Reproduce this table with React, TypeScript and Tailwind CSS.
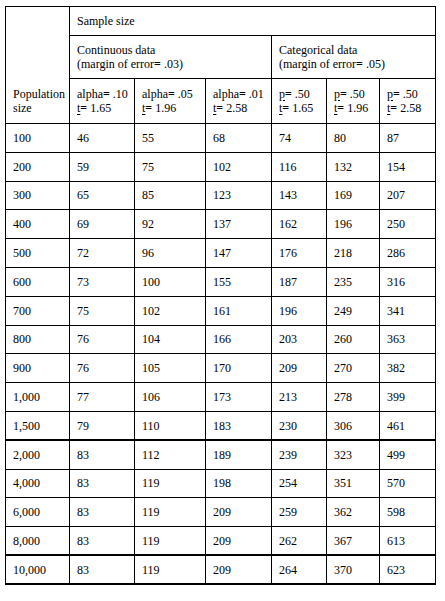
const rows: [string, number[]][] = [
  ["100", [46, 55, 68, 74, 80, 87]],
  ["200", [59, 75, 102, 116, 132, 154]],
  ["300", [65, 85, 123, 143, 169, 207]],
  ["400", [69, 92, 137, 162, 196, 250]],
  ["500", [72, 96, 147, 176, 218, 286]],
  ["600", [73, 100, 155, 187, 235, 316]],
  ["700", [75, 102, 161, 196, 249, 341]],
  ["800", [76, 104, 166, 203, 260, 363]],
  ["900", [76, 105, 170, 209, 270, 382]],
  ["1,000", [77, 106, 173, 213, 278, 399]],
  ["1,500", [79, 110, 183, 230, 306, 461]],
  ["2,000", [83, 112, 189, 239, 323, 499]],
  ["4,000", [83, 119, 198, 254, 351, 570]],
  ["6,000", [83, 119, 209, 259, 362, 598]],
  ["8,000", [83, 119, 209, 262, 367, 613]],
  ["10,000", [83, 119, 209, 264, 370, 623]],
];

// rows that get the heavier rule above them
const thick = new Set(["2,000", "10,000"]);

const Eq = () => <span className="font-bold">=</span>;

function Param({ sym, a, t }: { sym: string; a: string; t: string }) {
  return (
    <>
      {sym === "t" ? (
        <>
          alpha<Eq /> {a}
        </>
      ) : (
        <>
          <span className="underline underline-offset-2">p</span>
          <Eq /> {a}
        </>
      )}
      <br />
      <span className="underline underline-offset-2">t</span>
      <Eq /> {t}
    </>
  );
}

export default function App() {
  const cell = "border border-black pl-[7px] pr-0 align-middle text-left font-normal whitespace-nowrap";
  return (
    <div className="min-h-screen bg-white pl-[5px] pt-[6px] text-[12px] leading-[14px] text-black" style={{ fontFamily: '"Liberation Serif", "Times New Roman", serif' }}>
      <table className="w-[430px] table-fixed border-collapse border-b-2 border-black">
        <colgroup>
          <col className="w-[64px]" />
          <col className="w-[65px]" />
          <col className="w-[71px]" />
          <col className="w-[66px]" />
          <col className="w-[55px]" />
          <col className="w-[53px]" />
          <col className="w-[56px]" />
        </colgroup>
        <thead>
          <tr className="h-[29px]">
            <th rowSpan={3} className={`${cell} !align-bottom pb-[8px]`}>
              Population
              <br />
              size
            </th>
            <th colSpan={6} className={cell}>
              Sample size
            </th>
          </tr>
          <tr className="h-[43px]">
            <th colSpan={3} className={cell}>
              Continuous data
              <br />
              (margin of error<Eq /> .03)
            </th>
            <th colSpan={3} className={cell}>
              Categorical data
              <br />
              (margin of error<Eq /> .05)
            </th>
          </tr>
          <tr className="h-[45px]">
            <th className={cell}>
              <Param sym="t" a=".10" t="1.65" />
            </th>
            <th className={cell}>
              <Param sym="t" a=".05" t="1.96" />
            </th>
            <th className={cell}>
              <Param sym="t" a=".01" t="2.58" />
            </th>
            <th className={cell}>
              <Param sym="p" a=".50" t="1.65" />
            </th>
            <th className={cell}>
              <Param sym="p" a=".50" t="1.96" />
            </th>
            <th className={cell}>
              <Param sym="p" a=".50" t="2.58" />
            </th>
          </tr>
        </thead>
        <tbody>
          {rows.map(([pop, vals], i) => {
            const last = i === rows.length - 1;
            const top = thick.has(pop) ? "border-t-2" : "";
            const bottom = last ? "border-b-2" : "";
            return (
              <tr key={pop} className="h-[28.8px]">
                <td className={`${cell} ${top} ${bottom}`}>{pop}</td>
                {vals.map((v, j) => (
                  <td key={j} className={`${cell} ${top} ${bottom}`}>
                    {v}
                  </td>
                ))}
              </tr>
            );
          })}
        </tbody>
      </table>
    </div>
  );
}
